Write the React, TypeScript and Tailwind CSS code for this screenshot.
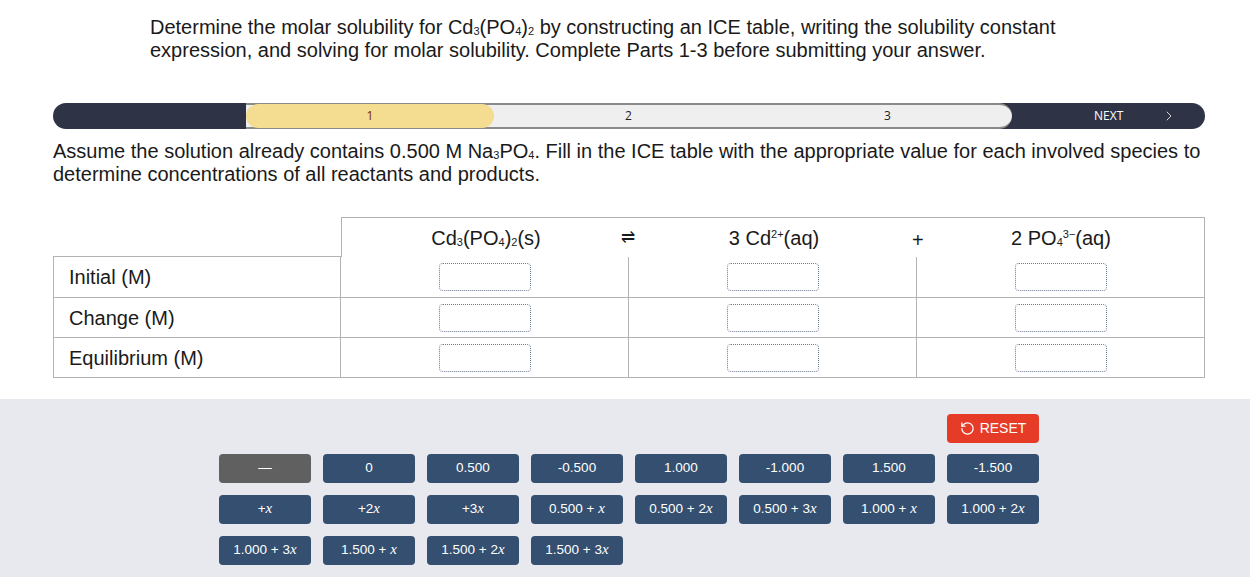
import React from 'react';
import { RotateCcw, ChevronRight } from 'lucide-react';

const X = () => <i className="font-['Liberation_Serif'] italic text-[15px] leading-none">x</i>;

const buttons: React.ReactNode[] = [
  '0', '0.500', '-0.500', '1.000', '-1.000', '1.500', '-1.500',
  <>+<X /></>, <>+2<X /></>, <>+3<X /></>,
  <>0.500 + <X /></>, <>0.500 + 2<X /></>, <>0.500 + 3<X /></>,
  <>1.000 + <X /></>, <>1.000 + 2<X /></>,
  <>1.000 + 3<X /></>, <>1.500 + <X /></>, <>1.500 + 2<X /></>, <>1.500 + 3<X /></>,
];

const Sub = ({ children }: { children: React.ReactNode }) => (
  <span className="text-[11px] leading-none align-[-1px]">{children}</span>
);
const Sup = ({ children }: { children: React.ReactNode }) => (
  <span className="text-[11px] leading-none align-[7px]">{children}</span>
);

const Box = () => (
  <div className="w-[92px] h-[28px] rounded-[4px] border border-dotted border-[#6b7a92] bg-white" />
);

const rows = ['Initial (M)', 'Change (M)', 'Equilibrium (M)'];

export default function App() {
  return (
    <div className="w-[1250px] h-[577px] bg-white text-[#1a1a1a] font-['Liberation_Sans',Arial,sans-serif] flex flex-col overflow-hidden">
      <p className="pl-[150px] pt-[16px] text-[20px] leading-[23px] w-[1100px]">
        Determine the molar solubility for Cd<Sub>3</Sub>(PO<Sub>4</Sub>)<Sub>2</Sub> by constructing an ICE table, writing the solubility constant expression, and solving for molar solubility. Complete Parts 1-3 before submitting your answer.
      </p>

      {/* step bar */}
      <div className="ml-[53px] mt-[41px] w-[1152px] h-[26px] shrink-0 rounded-full bg-[#2e3445] flex items-stretch font-['Open_Sans',sans-serif] text-[12px]">
        <div className="w-[193px]" />
        <div className="w-[766px] flex bg-[#efefef] border-y-2 border-[#8a8a8a] rounded-r-full">
          <div className="w-[248px] -my-[1px] rounded-full bg-[#f4dc90] flex items-center justify-center text-[#7a2a00]">1</div>
          <div className="w-[269px] flex items-center justify-center text-[#222]">2</div>
          <div className="w-[249px] flex items-center justify-center text-[#222]">3</div>
        </div>
        <div className="flex-1 flex items-center text-white">
          <span className="ml-[82px] text-[12px]">NEXT</span>
          <ChevronRight className="ml-[38px] w-[16px] h-[16px]" strokeWidth={1.2} />
        </div>
      </div>

      <p className="pl-[53px] pt-[11px] text-[20px] leading-[23px] w-[1240px]">
        Assume the solution already contains 0.500 M Na<Sub>3</Sub>PO<Sub>4</Sub>. Fill in the ICE table with the appropriate value for each involved species to determine concentrations of all reactants and products.
      </p>

      {/* ICE table */}
      <div className="ml-[53px] mt-[31px] w-[1152px] text-[20px]">
        <div className="flex h-[40px]">
          <div className="w-[288px] border-b border-[#b3b3b3]" />
          <div className="flex-1 border border-b-0 border-[#b3b3b3] flex items-center relative">
            <div className="w-[288px] text-center">Cd<Sub>3</Sub>(PO<Sub>4</Sub>)<Sub>2</Sub>(s)</div>
            <div className="w-[288px] text-center">3 Cd<Sup>2+</Sup>(aq)</div>
            <div className="flex-1 text-center">2 PO<Sub>4</Sub><Sup>3−</Sup>(aq)</div>
            <span className="absolute left-[279px] top-[7px] text-[17px]">⇌</span>
            <span className="absolute left-[570px] top-[7px]">+</span>
          </div>
        </div>
        <div className="border border-t-0 border-[#b3b3b3]">
          {rows.map((r, i) => (
            <div key={r} className={`flex h-[40px] ${i > 0 ? 'border-t border-[#b3b3b3]' : ''}`}>
              <div className="w-[287px] pl-[15px] flex items-center border-r border-[#b3b3b3]">{r}</div>
              <div className="w-[288px] flex items-center justify-center border-r border-[#b3b3b3]"><Box /></div>
              <div className="w-[288px] flex items-center justify-center border-r border-[#b3b3b3]"><Box /></div>
              <div className="flex-1 flex items-center justify-center"><Box /></div>
            </div>
          ))}
        </div>
      </div>

      {/* answer bank */}
      <div className="mt-[21px] flex-1 bg-[#e8e8ef] pt-[15px]">
        <div className="ml-[219px] w-[820px] flex flex-col gap-[11px]">
          <div className="flex justify-end">
            <button className="w-[92px] h-[29px] rounded-[4px] bg-[#e53b27] text-white text-[14px] flex items-center justify-center gap-[5px]">
              <RotateCcw className="w-[15px] h-[15px]" strokeWidth={2} />
              RESET
            </button>
          </div>
          <div className="grid grid-cols-8 gap-x-[12px] gap-y-[12px] text-[13.5px] text-white">
            <div className="h-[29px] rounded-[4px] bg-[#606060] flex items-center justify-center">—</div>
            {buttons.map((b, i) => (
              <div key={i} className="h-[29px] rounded-[4px] bg-[#344f6f] flex items-center justify-center">
                <span>{b}</span>
              </div>
            ))}
          </div>
        </div>
      </div>
    </div>
  );
}
